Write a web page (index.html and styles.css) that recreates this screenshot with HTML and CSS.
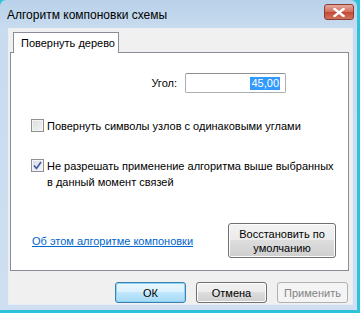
FILE: index.html
```html
<!DOCTYPE html>
<html lang="ru">
<head>
    <meta charset="UTF-8">
    <title>Алгоритм компоновки схемы</title>
    <link rel="stylesheet" href="styles.css">
</head>
<body>
    <div class="window">
        <div class="titlebar">
            <span class="title">Алгоритм компоновки схемы</span>
            <span class="close-btn">
                <svg width="12" height="9" viewBox="0 0 12 9">
                    <path d="M1.5 1 L10.5 8 M10.5 1 L1.5 8" stroke="#fff" stroke-width="2.4" stroke-linecap="square"/>
                </svg>
            </span>
        </div>
        <div class="client">
            <div class="tabs">
                <div class="tab active">Повернуть дерево</div>
            </div>
            <div class="panel">
                <div class="angle-row">
                    <span class="angle-label">Угол:</span>
                    <span class="textbox"><span class="selected">45,00</span></span>
                </div>
                <div class="check-row first">
                    <span class="checkbox"></span>
                    <span class="check-label">Повернуть символы узлов с одинаковыми углами</span>
                </div>
                <div class="check-row second">
                    <span class="checkbox checked">
                        <svg width="9" height="9" viewBox="0 0 9 9">
                            <path d="M1 4.5 L3.5 7.5 L8 1" stroke="#3c5ba0" stroke-width="1.6" fill="none"/>
                        </svg>
                    </span>
                    <span class="check-label">Не разрешать применение алгоритма выше выбранных<br>в данный момент связей</span>
                </div>
                <div class="bottom-row">
                    <a class="link" href="#">Об этом алгоритме компоновки</a>
                    <span class="button restore">Восстановить по<br>умолчанию</span>
                </div>
            </div>
            <div class="dialog-buttons">
                <span class="button default">ОК</span>
                <span class="button">Отмена</span>
                <span class="button disabled">Применить</span>
            </div>
        </div>
    </div>
</body>
</html>
```

FILE: styles.css
```css
/* Dialog window */
body {
    margin: 0;
    padding: 0;
    background-color: #2fc3d9;
    font-family: "Liberation Sans", Arial, sans-serif;
    font-size: 11px;
    color: #000;
    overflow: hidden;
}

.window {
    width: 357px;
    height: 310px;
    background: linear-gradient(to bottom, #b9d1ea 0px, #c8dbef 28px, #cfdff1 100%);
    border-radius: 6px 6px 0 0;
    box-sizing: border-box;
    display: flex;
    flex-direction: column;
    padding: 0 4px 5px 8px;
}

.titlebar {
    height: 28px;
    display: flex;
    align-items: center;
    justify-content: space-between;
    flex-shrink: 0;
}

.title {
    margin-left: -1px;
    margin-top: 2px;
    font-size: 12px;
}

.close-btn {
    width: 30px;
    height: 16px;
    margin-right: -1px;
    margin-top: -4px;
    box-sizing: border-box;
    border: 1px solid #8a3c33;
    border-radius: 3px;
    background: linear-gradient(to bottom, #e5a99c 0%, #d2705f 48%, #c24a37 52%, #d2735c 100%);
    display: flex;
    align-items: center;
    justify-content: center;
}

.client {
    flex: 1;
    background-color: #f0f0f0;
    border: 1px solid #e6eef7;
    border-top: none;
    display: flex;
    flex-direction: column;
    padding: 4px 3px 0 1px;
}

.tabs {
    display: flex;
    padding-left: 3px;
    height: 20px;
    position: relative;
    z-index: 1;
}

.tab {
    width: 106px;
    box-sizing: border-box;
    border: 1px solid #898c95;
    border-bottom: none;
    background-color: #fff;
    padding: 4px 0 0 7px;
    height: 21px;
    white-space: nowrap;
}

.panel {
    background-color: #fff;
    border: 1px solid #898c95;
    height: 219px;
    box-sizing: border-box;
    padding: 20px 0 0 20px;
}

.angle-row {
    display: flex;
    align-items: center;
    height: 20px;
}

.angle-label {
    width: 146px;
    text-align: right;
    margin-right: 8px;
}

.textbox {
    width: 101px;
    height: 20px;
    box-sizing: border-box;
    border: 1px solid #abadb3;
    border-top-color: #8e8f93;
    border-radius: 2px;
    background-color: #fff;
    display: flex;
    align-items: center;
    justify-content: flex-end;
    padding-right: 5px;
}

.selected {
    background-color: #3399ff;
    color: #fff;
    line-height: 13px;
    padding: 0 1px;
}

.check-row {
    display: flex;
    align-items: flex-start;
    line-height: 16px;
}

.check-row.first {
    margin-top: 25px;
}

.check-row.second {
    margin-top: 24px;
}

.checkbox {
    width: 13px;
    height: 13px;
    box-sizing: border-box;
    border: 1px solid #8e8f8f;
    background: linear-gradient(135deg, #dcdcdc 0%, #f4f4f4 100%);
    box-shadow: inset 0 0 0 1px #f4f4f4;
    margin: 1px 3px 0 0;
    display: flex;
    align-items: center;
    justify-content: center;
    flex-shrink: 0;
}

.checkbox.checked {
    background: linear-gradient(135deg, #d6dbe6 0%, #f6f7fa 100%);
}

.bottom-row {
    display: flex;
    align-items: center;
    justify-content: space-between;
    margin-top: 33px;
    padding-right: 12px;
}

.link {
    color: #0066cc;
    text-decoration: underline;
    margin-left: 1px;
}

.button {
    box-sizing: border-box;
    border: 1px solid #707070;
    border-radius: 3px;
    background: linear-gradient(to bottom, #f2f2f2 0%, #ebebeb 49%, #dddddd 50%, #cfcfcf 100%);
    box-shadow: inset 0 0 0 1px #fcfcfc;
    display: flex;
    align-items: center;
    justify-content: center;
    text-align: center;
}

.restore {
    width: 108px;
    height: 35px;
    line-height: 14px;
}

.dialog-buttons {
    display: flex;
    justify-content: flex-end;
    gap: 10px;
    margin-top: 11px;
    padding-right: 1px;
}

.dialog-buttons .button {
    width: 71px;
    height: 21px;
}

.button.default {
    border-color: #3c7fb1;
    background: linear-gradient(to bottom, #eaf6fd 0%, #d9f0fc 49%, #bee6fd 50%, #a7d9f5 100%);
    box-shadow: inset 0 0 0 1px #8cd6f5;
}

.button.disabled {
    border-color: #adb2b5;
    background: #f4f4f4;
    box-shadow: none;
    color: #838383;
}
```
